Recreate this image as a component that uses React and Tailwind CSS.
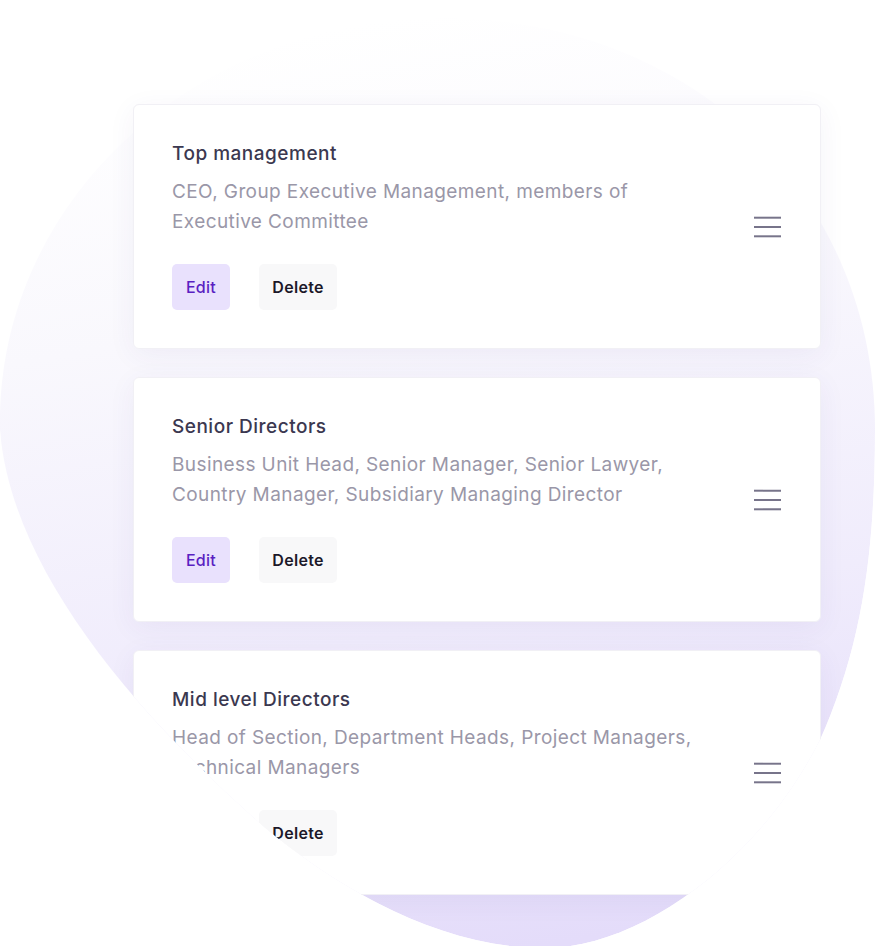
import React from 'react';

const roles = [
    { title: 'Top management', description: 'CEO, Group Executive Management, members of Executive Committee' },
    { title: 'Senior Directors', description: 'Business Unit Head, Senior Manager, Senior Lawyer, Country Manager, Subsidiary Managing Director' },
    { title: 'Mid level Directors', description: 'Head of Section, Department Heads, Project Managers, Technical Managers' },
];

const MenuIcon = () => (
    <svg width="27" height="22" viewBox="0 0 27 22" fill="none" className="shrink-0">
        <line x1="0" y1="1.7" x2="27" y2="1.7" stroke="#77748a" strokeWidth="2" />
        <line x1="0" y1="11" x2="27" y2="11" stroke="#77748a" strokeWidth="2" />
        <line x1="0" y1="20.3" x2="27" y2="20.3" stroke="#77748a" strokeWidth="2" />
    </svg>
);

const Blob = () => (
    <svg className="absolute inset-0 pointer-events-none" width="875" height="946" viewBox="0 0 875 946">
        <defs>
            <linearGradient id="blobFill" x1="0.45" y1="0" x2="0.6" y2="1">
                <stop offset="0" stopColor="#ffffff" />
                <stop offset="0.3" stopColor="#f9f8fd" />
                <stop offset="0.65" stopColor="#f0ecfc" />
                <stop offset="1" stopColor="#e4dcfa" />
            </linearGradient>
        </defs>
        <path
            d="M450 18 C700 22 875 200 875 430 C875 560 860 650 820 740 C760 860 640 948 545 948 C440 948 340 890 264 827 C120 700 5 560 0 430 C-5 200 200 14 450 18 Z"
            fill="url(#blobFill)"
        />
    </svg>
);

const RoleCard = ({ role }) => (
    <div className="w-[688px] h-[245px] shrink-0 rounded-[6px] bg-white border border-[#f1f0f5] shadow-[0_6px_28px_rgba(70,50,140,0.06)] flex items-center justify-between pl-[38px] pr-[39px]">
        <div className="w-[545px] h-full pt-[35px]">
            <h3 className="text-[19px] leading-[28px] font-medium tracking-[0.5px] text-[#3b3850]">{role.title}</h3>
            <p className="mt-[9px] text-[19px] leading-[30px] tracking-[0.4px] text-[#9a97a8]">{role.description}</p>
            <div className="mt-[27px] flex gap-[29px]">
                <button className="h-[46px] w-[58px] rounded-[5px] bg-[#e9e1fd] text-[#5a1fc2] text-[16px] font-medium tracking-[0.3px]">Edit</button>
                <button className="h-[46px] w-[78px] rounded-[5px] bg-[#f8f8f9] text-[#1c1829] text-[16px] font-semibold tracking-[0.3px]">Delete</button>
            </div>
        </div>
        <MenuIcon />
    </div>
);

export default function App() {
    return (
        <div className="w-[875px] h-[946px] bg-white overflow-hidden" style={{ fontFamily: 'Inter, "Noto Sans", sans-serif' }}>
            <div className="relative w-[875px] h-[946px] [clip-path:path('M0_0H875V430C875_560_860_650_820_740C760_860_640_948_545_948C440_948_340_890_264_827C120_700_10_560_0_430Z')]">
                <Blob />
                <div className="relative flex flex-col gap-[28px] pt-[104px] pl-[133px]">
                    {roles.map((role) => (
                        <RoleCard key={role.title} role={role} />
                    ))}
                </div>
            </div>
        </div>
    );
}
